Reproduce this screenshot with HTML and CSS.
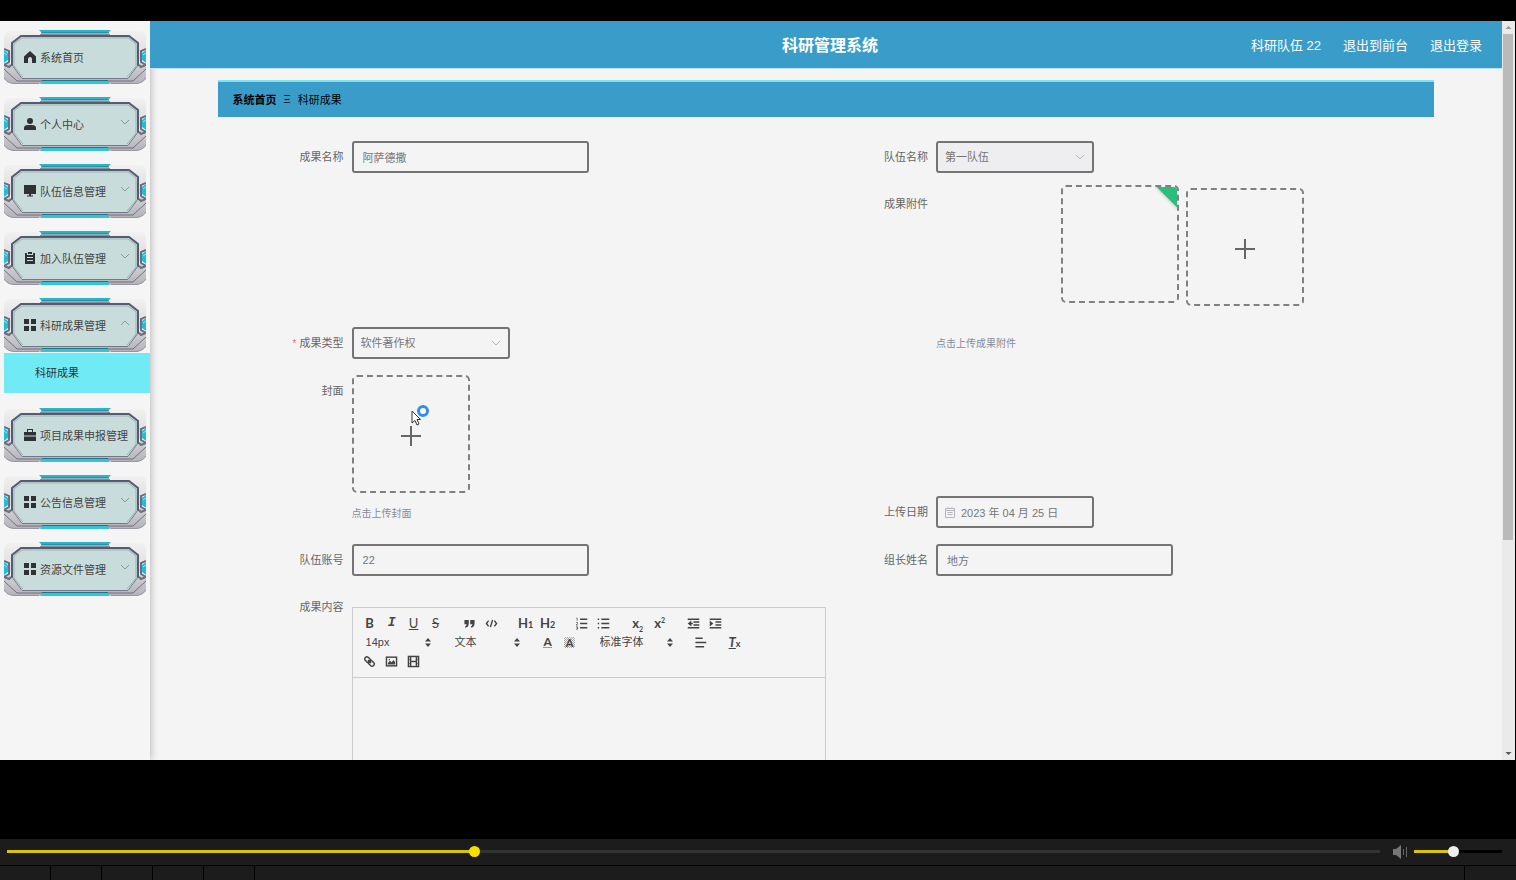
FILE: index.html
```html
<!DOCTYPE html>
<html lang="zh-CN">
<head>
    <meta charset="UTF-8">
    <meta name="viewport" content="width=device-width, initial-scale=1.0">
    <title>科研管理系统</title>
    <link rel="stylesheet" href="styles.css">
</head>
<body>
    <!-- shared icons -->
    <svg class="sprite" aria-hidden="true">
        <defs>
            <linearGradient id="silver" x1="0" y1="0" x2="0" y2="1">
                <stop offset="0" stop-color="#f1f1f1"/>
                <stop offset="1" stop-color="#d6d5d9"/>
            </linearGradient>
            <linearGradient id="steel" x1="0" y1="0" x2="0" y2="1">
                <stop offset="0" stop-color="#d5d4d8"/>
                <stop offset="1" stop-color="#b3b2b8"/>
            </linearGradient>
            <g id="half">
                <path d="M0 9Q0 2 6 2H33L36 5H71V9H17L9 16V35L6 31V20L0 19Z" fill="url(#silver)"/>
                <path d="M0 35L5 33L9 37L18 50H71V53H38L35 55H10Q3 54 0 49Z" fill="url(#steel)"/>
                <path d="M71 7H17L8 14V37L18 50H71Z" fill="#c8dddb"/>
                <path d="M71 9H18L10 15V37L19 48" fill="none" stroke="#9fb1b6"/>
                <path d="M71 7H17L8 14V37" fill="none" stroke="#555b70" stroke-width="2"/>
                <path d="M8 36L18 49.500H71" fill="none" stroke="#737888"/>
                <path d="M0 20L5 22V33L0 36L5 38L7 36" fill="none" stroke="#6b6f7f" stroke-width="2"/>
                <path d="M0 21L4 24V31L0 34Z" fill="#22bdd2"/>
                <path d="M0 24L3 26" stroke="#83edf5"/>
                <path d="M0 40L13 52H71" fill="none" stroke="#716f7d"/>
                <path d="M0 49Q3 54 10 54.500H35" fill="none" stroke="#9796a0"/>
                <path d="M36 5.500H71" stroke="#888c99"/>
                <path d="M35 1H71V4H38Z" fill="#25b5cc"/>
                <path d="M37 4H71" stroke="#2a7185"/>
                <path d="M38 52H71V55H36Z" fill="#35c3d8"/>
                <path d="M38 51.500H71" stroke="#2a7185"/>
            </g>
        </defs>
        <symbol id="frame" viewBox="0 0 142 55">
            <use href="#half"/>
            <use href="#half" transform="translate(142 0) scale(-1 1)"/>
        </symbol>
        <symbol id="home" viewBox="0 0 12 12"><path d="M6 0L0 5.500V12H4V8a2 2 0 0 1 4 0V12H12V5.500Z"/></symbol>
        <symbol id="user" viewBox="0 0 12 12"><circle cx="6" cy="3" r="3"/><path d="M0 12V10Q0 7 4 7H8Q12 7 12 10V12Z"/></symbol>
        <symbol id="monitor" viewBox="0 0 12 12"><path d="M0 0H12V9H7V10.500H9V11.500H3V10.500H5V9H0Z"/></symbol>
        <symbol id="clipboard" viewBox="0 0 12 12"><path fill-rule="evenodd" d="M1 1H3V3H9V1H11V12H1ZM3 5V6H9V5ZM3 8V9H9V8Z"/><path d="M4 0H8V2H4Z"/></symbol>
        <symbol id="grid" viewBox="0 0 12 12"><path d="M0 0H5V5H0ZM7 0H12V5H7ZM0 7H5V12H0ZM7 7H12V12H7Z"/></symbol>
        <symbol id="briefcase" viewBox="0 0 12 12"><path fill-rule="evenodd" d="M3 0H9V3H12V6.500H0V3H3ZM4 1V3H8V1ZM0 7.500H12V12H0Z"/></symbol>
        <symbol id="down" viewBox="0 0 10 6"><path d="M1 1L5 5L9 1" fill="none" stroke="currentColor"/></symbol>
        <symbol id="up" viewBox="0 0 10 6"><path d="M1 5L5 1L9 5" fill="none" stroke="currentColor"/></symbol>
        <symbol id="sort" viewBox="0 0 6 9"><path d="M0 3.500L3 0L6 3.500ZM0 5.500L3 9L6 5.500Z"/></symbol>
    </svg>

    <div class="player">
        <div class="screen">
            <nav class="sidebar">
                <ul class="menu">
                    <li><a class="menu-item" href="#"><svg class="frame"><use href="#frame"/></svg><svg class="icon"><use href="#home"/></svg><span>系统首页</span></a></li>
                    <li><a class="menu-item" href="#"><svg class="frame"><use href="#frame"/></svg><svg class="icon"><use href="#user"/></svg><span>个人中心</span><svg class="arrow"><use href="#down"/></svg></a></li>
                    <li><a class="menu-item" href="#"><svg class="frame"><use href="#frame"/></svg><svg class="icon"><use href="#monitor"/></svg><span>队伍信息管理</span><svg class="arrow"><use href="#down"/></svg></a></li>
                    <li><a class="menu-item" href="#"><svg class="frame"><use href="#frame"/></svg><svg class="icon"><use href="#clipboard"/></svg><span>加入队伍管理</span><svg class="arrow"><use href="#down"/></svg></a></li>
                    <li class="open">
                        <a class="menu-item" href="#"><svg class="frame"><use href="#frame"/></svg><svg class="icon"><use href="#grid"/></svg><span>科研成果管理</span><svg class="arrow"><use href="#up"/></svg></a>
                        <a class="submenu-item" href="#">科研成果</a>
                    </li>
                    <li><a class="menu-item" href="#"><svg class="frame"><use href="#frame"/></svg><svg class="icon"><use href="#briefcase"/></svg><span>项目成果申报管理</span></a></li>
                    <li><a class="menu-item" href="#"><svg class="frame"><use href="#frame"/></svg><svg class="icon"><use href="#grid"/></svg><span>公告信息管理</span><svg class="arrow"><use href="#down"/></svg></a></li>
                    <li><a class="menu-item" href="#"><svg class="frame"><use href="#frame"/></svg><svg class="icon"><use href="#grid"/></svg><span>资源文件管理</span><svg class="arrow"><use href="#down"/></svg></a></li>
                </ul>
            </nav>

            <main class="main">
                <header class="header">
                    <h1>科研管理系统</h1>
                    <div class="header-links">
                        <a href="#">科研队伍 22</a>
                        <a href="#">退出到前台</a>
                        <a href="#">退出登录</a>
                    </div>
                </header>
                <div class="breadcrumb">
                    <a href="#">系统首页</a>
                    <span>Ξ</span>
                    <span>科研成果</span>
                </div>

                <form class="form">
                    <div class="field name">
                        <label for="name">成果名称</label>
                        <input class="text-input" id="name" type="text" value="阿萨德撒">
                    </div>
                    <div class="field team">
                        <label for="team">队伍名称</label>
                        <div class="select-box">
                            <select id="team" disabled><option>第一队伍</option></select>
                            <svg class="arrow"><use href="#down"/></svg>
                        </div>
                    </div>
                    <div class="field attachment">
                        <span class="label">成果附件</span>
                        <div class="upload">
                            <div class="cards">
                                <div class="card done"></div>
                                <button class="card" type="button" aria-label="上传附件"><svg class="plus" viewBox="0 0 20 20"><path d="M10 0V20M0 10H20"/></svg></button>
                            </div>
                            <div class="tip">点击上传成果附件</div>
                        </div>
                    </div>
                    <div class="field type">
                        <label for="type"><span class="star">*</span> 成果类型</label>
                        <div class="select-box">
                            <select id="type"><option>软件著作权</option></select>
                            <svg class="arrow"><use href="#down"/></svg>
                        </div>
                    </div>
                    <div class="field cover">
                        <span class="label">封面</span>
                        <div class="upload">
                            <button class="card" type="button" aria-label="上传封面">
                                <svg class="plus" viewBox="0 0 20 20"><path d="M10 0V20M0 10H20"/></svg>
                                <svg class="cursor" viewBox="0 0 20 22">
                                    <circle cx="12" cy="6" r="4.500" fill="#fff" stroke="#2f8fee" stroke-width="3"/>
                                    <path d="M1 6V18L4 15.500L6 20L8 19L6 14.500H9.500Z" fill="#fff" stroke="#333"/>
                                </svg>
                            </button>
                            <div class="tip">点击上传封面</div>
                        </div>
                    </div>
                    <div class="field date">
                        <label for="date">上传日期</label>
                        <div class="date-box">
                            <svg class="calendar" viewBox="0 0 10 11"><path d="M.5 1.500H9.500V10.500H.5ZM.5 3.500H9.500M2.500 5.500H7.500M2.500 7.500H7.500M3 0V2M7 0V2"/></svg>
                            <input id="date" type="text" value="2023 年 04 月 25 日">
                        </div>
                    </div>
                    <div class="field account">
                        <label for="account">队伍账号</label>
                        <input class="text-input" id="account" type="text" value="22">
                    </div>
                    <div class="field leader">
                        <label for="leader">组长姓名</label>
                        <input class="text-input" id="leader" type="text" value="地方">
                    </div>
                    <div class="field content">
                        <span class="label">成果内容</span>
                        <div class="editor">
                            <div class="toolbar">
                                <div class="tool-row">
                                    <div class="tools">
                                        <button type="button"><b>B</b></button>
                                        <button type="button"><i class="italic">I</i></button>
                                        <button type="button"><u>U</u></button>
                                        <button type="button"><s>S</s></button>
                                    </div>
                                    <div class="tools">
                                        <button type="button" aria-label="引用"><svg viewBox="0 0 18 18"><path class="fill" d="M2 4H8V9Q8 14 3 15V13Q5 12 5 10H2ZM10 4H16V9Q16 14 11 15V13Q13 12 13 10H10Z"/></svg></button>
                                        <button type="button" aria-label="代码"><svg viewBox="0 0 18 18"><path d="M5 5L2 9L5 13M13 5L16 9L13 13M10.500 4L7.500 14"/></svg></button>
                                    </div>
                                    <div class="tools">
                                        <button type="button"><b>H<small>1</small></b></button>
                                        <button type="button"><b>H<small>2</small></b></button>
                                    </div>
                                    <div class="tools">
                                        <button type="button" aria-label="有序列表"><svg viewBox="0 0 18 18"><path d="M7 3H17M7 9H17M7 15H17"/><path class="thin" d="M2 1.500H3V5M1.500 7.500H3.500V9L1.500 11H4M1.500 13.500H3.500V17H1.500M2 15H3.500"/></svg></button>
                                        <button type="button" aria-label="无序列表"><svg viewBox="0 0 18 18"><path d="M6 3H17M6 9H17M6 15H17M1 3H3M1 9H3M1 15H3"/></svg></button>
                                    </div>
                                    <div class="tools">
                                        <button type="button"><b>x<sub>2</sub></b></button>
                                        <button type="button"><b>x<sup>2</sup></b></button>
                                    </div>
                                    <div class="tools">
                                        <button type="button" aria-label="减少缩进"><svg viewBox="0 0 18 18"><path d="M1 3H17M9 7H17M9 11H17M1 15H17M4 9H8"/><path class="fill" d="M1 9L6 5V13Z"/></svg></button>
                                        <button type="button" aria-label="增加缩进"><svg viewBox="0 0 18 18"><path d="M1 3H17M9 7H17M9 11H17M1 15H17"/><path class="fill" d="M6 9L1 5V13Z"/></svg></button>
                                    </div>
                                </div>
                                <div class="tool-row">
                                    <div class="picker"><select aria-label="字号"><option>14px</option></select><svg><use href="#sort"/></svg></div>
                                    <div class="picker"><select aria-label="标题"><option>文本</option></select><svg><use href="#sort"/></svg></div>
                                    <div class="tools">
                                        <button type="button"><b class="color">A</b></button>
                                        <button type="button"><b class="background">A</b></button>
                                    </div>
                                    <div class="picker wide"><select aria-label="字体"><option>标准字体</option></select><svg><use href="#sort"/></svg></div>
                                    <div class="tools">
                                        <button type="button" aria-label="对齐"><svg viewBox="0 0 18 18"><path d="M2 3H12M2 9H17M2 15H14"/></svg></button>
                                    </div>
                                    <div class="tools">
                                        <button type="button"><b class="clean"><u><i>T</i></u><small>x</small></b></button>
                                    </div>
                                </div>
                                <div class="tool-row">
                                    <div class="tools">
                                        <button type="button" aria-label="链接"><svg viewBox="0 0 18 18"><g transform="rotate(45 9 9)"><rect x="1" y="6" width="9" height="6" rx="3"/><rect x="8" y="6" width="9" height="6" rx="3"/><path d="M6 9H12"/></g></svg></button>
                                        <button type="button" aria-label="图片"><svg viewBox="0 0 18 18"><rect x="2" y="3" width="14" height="12"/><path class="fill" d="M4 13V11L7 8L9 10L12 7L14 10V13Z"/><circle class="fill" cx="6" cy="6.500" r="1"/></svg></button>
                                        <button type="button" aria-label="视频"><svg viewBox="0 0 18 18"><rect x="2" y="2" width="14" height="14"/><path d="M5 2V16M13 2V16M5 9H13"/><path class="thin" d="M2 6H5M2 12H5M13 6H16M13 12H16"/></svg></button>
                                    </div>
                                </div>
                            </div>
                            <div class="editor-body" contenteditable="true"></div>
                        </div>
                    </div>
                </form>
            </main>

            <div class="scrollbar">
                <svg class="muted" viewBox="0 0 13 13"><path d="M3.500 8L6.500 5L9.500 8Z"/></svg>
                <div class="scroll-track"><div class="scroll-thumb"></div></div>
                <svg viewBox="0 0 13 13"><path d="M3.500 5L6.500 8L9.500 5Z"/></svg>
            </div>
        </div>

        <div class="controls">
            <input class="range seek" type="range" aria-label="进度" min="0" max="1000" value="339" style="--fill: 34%">
            <svg class="speaker" viewBox="0 0 16 14"><path d="M1 4H4L9 0V14L4 10H1Z" fill="#777"/><path d="M11.500 4V10M14.500 2V12" stroke="#666"/></svg>
            <input class="range volume" type="range" aria-label="音量" min="0" max="100" value="44" style="--fill: 44%">
        </div>
        <div class="control-strip">
            <span></span><span></span><span></span><span></span><span></span>
            <span class="last"></span>
        </div>
    </div>
</body>
</html>
```
FILE: styles.css
```css
*, *::before, *::after {
    box-sizing: border-box;
}
body {
    margin: 0;
    background-color: #000;
    font-family: "Liberation Sans", "Noto Sans CJK SC", sans-serif;
    font-size: 11px;
    color: #666;
}
a {
    color: inherit;
    text-decoration: none;
}
button, input, select {
    margin: 0;
    font: inherit;
    color: inherit;
}
.sprite {
    position: absolute;
    width: 0;
    height: 0;
}

/* video player */
.player {
    display: flex;
    flex-direction: column;
    height: 100vh;
    padding-top: 21px;
}
.screen {
    flex: 1;
    display: flex;
    min-height: 0;
    margin: 0 1px 79px 0;
    overflow: hidden;
    background-color: #f4f4f4;
}

/* side menu */
.sidebar {
    flex: none;
    width: 150px;
    padding: 8px 0 0 4px;
    background-color: #f5f5f5;
    box-shadow: 0 0 8px rgba(0, 0, 0, 0.3);
}
.menu {
    margin: 0;
    padding: 0;
    list-style: none;
}
.menu li {
    margin-bottom: 12px;
}
.menu .open {
    margin-bottom: 14px;
}
.menu-item {
    position: relative;
    display: flex;
    align-items: center;
    gap: 4px;
    width: 142px;
    height: 55px;
    padding: 0 16px 0 20px;
    white-space: nowrap;
    color: #444;
}
.menu-item span, .menu-item .icon, .menu-item .arrow {
    position: relative;
}
.frame {
    position: absolute;
    inset: 0;
    width: 142px;
    height: 55px;
}
.icon {
    flex: none;
    width: 12px;
    height: 12px;
    fill: #303133;
}
.arrow {
    width: 10px;
    height: 6px;
    color: #909399;
}
.menu-item .arrow {
    margin: 0 0 4px auto;
}
.submenu-item {
    display: block;
    height: 40px;
    margin-top: 1px;
    padding-left: 31px;
    line-height: 40px;
    color: #333;
    background-color: #70ebf6;
}

/* page */
.main {
    flex: 1;
    min-width: 0;
}
.header {
    position: relative;
    display: flex;
    align-items: center;
    justify-content: center;
    height: 48px;
    padding-bottom: 1px;
    border-bottom: 1px solid #bfe3ee;
    background-color: #3a9dc9;
    color: #fff;
}
.header h1 {
    margin: 0;
    padding-left: 8px;
    font-size: 16px;
}
.header-links {
    position: absolute;
    right: 20px;
    display: flex;
    gap: 22px;
    font-size: 13px;
}
.breadcrumb {
    display: flex;
    align-items: center;
    gap: 7px;
    height: 37px;
    margin: 11px 5% 0;
    padding: 0 15px 1px;
    border-top: 2px solid #80e4ee;
    background-color: #3a9dc9;
    color: #000;
}
.breadcrumb a {
    font-weight: bold;
}

.form {
    display: grid;
    grid-template-columns: 1fr 1fr;
    grid-template-rows: 47px 139px 48px 169px 47px auto;
    margin: 0 5%;
    padding: 24px 24px 0;
}
.field {
    display: flex;
    align-items: flex-start;
}
.team, .attachment, .date, .leader {
    grid-column: 2;
}
.name, .team {
    grid-row: 1;
}
.attachment {
    grid-row: 2 / 4;
}
.type {
    grid-row: 3;
}
.cover, .date {
    grid-row: 4;
}
.date {
    align-items: flex-end;
    padding-bottom: 16px;
}
.account, .leader {
    grid-row: 5;
}
.content {
    grid-row: 6;
}
.field > label, .label {
    flex: none;
    width: 110px;
    padding-right: 8px;
    line-height: 32px;
    text-align: right;
}
.star {
    color: #f56c6c;
}
.text-input, .select-box, .date-box {
    height: 32px;
    border: 2px solid #747474;
    border-radius: 3px;
    background-color: transparent;
}
.text-input {
    width: 50%;
    max-width: 237px;
    padding: 0 9px;
    color: #777;
}
.select-box, .date-box {
    display: flex;
    align-items: center;
    width: 158px;
    color: #777;
}
.select-box select {
    flex: 1;
    height: 100%;
    padding: 0 0 0 7px;
    border: 0;
    appearance: none;
    background-color: transparent;
    opacity: 1;
}
.select-box .arrow {
    margin-right: 7px;
    color: #b4b7bd;
}
.team .select-box {
    background-color: #eeeef1;
}
.date-box {
    gap: 6px;
    padding-left: 7px;
}
.date-box input {
    width: 120px;
    padding: 0;
    border: 0;
    background-color: transparent;
}
.calendar {
    width: 10px;
    height: 11px;
    fill: none;
    stroke: #b4b7bd;
}

/* upload */
.card {
    position: relative;
    display: flex;
    align-items: center;
    justify-content: center;
    width: 118px;
    height: 118px;
    padding: 4px 0 0;
    border: 2px dashed #808080;
    border-radius: 5px;
    background-color: transparent;
}
.cards {
    display: flex;
    align-items: flex-end;
    gap: 7px;
    margin: -3px 0 0 125px;
}
.done {
    margin-bottom: 3px;
    overflow: hidden;
}
.done::after {
    content: "";
    position: absolute;
    top: -15px;
    right: -16px;
    width: 30px;
    height: 30px;
    background-color: #2bbd7e;
    box-shadow: 0 0 4px rgba(0, 0, 0, 0.3);
    transform: rotate(45deg);
}
.plus {
    width: 20px;
    height: 20px;
    stroke: #666;
    stroke-width: 2;
}
.cursor {
    position: absolute;
    left: 57px;
    top: 28px;
    width: 20px;
    height: 22px;
}
.tip {
    font-size: 10px;
    line-height: 16px;
    color: #858b99;
}
.attachment .tip {
    margin-top: 30px;
}
.cover .tip {
    margin-top: 13px;
}

/* rich text editor */
.editor {
    flex: 1;
    margin-top: 16px;
    border: 1px solid #ccc;
}
.toolbar {
    padding: 6px;
    height: 70px;
    border-bottom: 1px solid #ccc;
    color: #444;
}
.tool-row {
    display: flex;
    gap: 12px;
    height: 19px;
}
.tools {
    display: flex;
}
.tools button {
    display: flex;
    align-items: center;
    justify-content: center;
    width: 22px;
    height: 19px;
    padding: 0 0 1px;
    border: 0;
    background-color: transparent;
    font-family: Lato, sans-serif;
    font-size: 13px;
    line-height: 12px;
}
.tools svg {
    width: 13px;
    height: 13px;
    fill: none;
    stroke: #444;
    stroke-width: 2;
}
.tools .fill {
    fill: #444;
    stroke: none;
}
.tools .thin {
    stroke-width: 1;
}
.tools small {
    font-size: 9px;
    line-height: 1px;
}
.tools sub, .tools sup {
    font-size: 7px;
    line-height: 1px;
}
.tools .italic {
    font-family: "Liberation Mono", monospace;
    font-weight: bold;
}
.tools .color {
    border-bottom: 1px solid #999;
    font-size: 12px;
    line-height: 10px;
}
.tools .background {
    width: 11px;
    height: 11px;
    background: repeating-conic-gradient(#aaa 0 25%, transparent 0 50%) 0 0 / 2px 2px;
    font-size: 11px;
    line-height: 11px;
}
.picker {
    display: flex;
    align-items: center;
    width: 77px;
    padding: 0 5px 1px 7px;
}
.picker.wide {
    width: 85px;
}
.picker select {
    flex: 1;
    min-width: 0;
    padding: 0;
    border: 0;
    appearance: none;
    background-color: transparent;
}
.picker svg {
    width: 6px;
    height: 9px;
    fill: #444;
}
.editor-body {
    height: 200px;
}

/* page scrollbar */
.scrollbar {
    flex: none;
    display: flex;
    flex-direction: column;
    width: 13px;
    background-color: #eaeaea;
}
.scrollbar svg {
    flex: none;
    width: 13px;
    height: 13px;
    fill: #555;
}
.scrollbar .muted {
    fill: #999;
}
.scroll-track {
    flex: 1;
    padding: 0 2px 0 1px;
}
.scroll-thumb {
    height: 71%;
    background-color: #bababa;
}

/* player controls */
.controls {
    display: flex;
    align-items: center;
    height: 26px;
    padding: 0 14px 1px 7px;
    background-color: #1c1c1c;
}
.range {
    height: 11px;
    margin: 0;
    appearance: none;
    background: transparent;
}
.range::-webkit-slider-runnable-track {
    height: 3px;
    background: linear-gradient(to right, #d9c500 var(--fill), #333 var(--fill));
}
.range::-webkit-slider-thumb {
    appearance: none;
    width: 11px;
    height: 11px;
    margin-top: -4px;
    border-radius: 50%;
    background-color: #f6df00;
}
.seek {
    flex: 1;
}
.volume {
    width: 88px;
}
.volume::-webkit-slider-runnable-track {
    background: linear-gradient(to right, #d9c500 var(--fill), #000 var(--fill));
}
.volume::-webkit-slider-thumb {
    background-color: #eee;
}
.speaker {
    width: 16px;
    height: 14px;
    margin: 0 6px 0 12px;
}
.control-strip {
    display: flex;
    height: 15px;
    border-top: 1px solid #000;
    background-color: #1c1c1c;
}
.control-strip span {
    width: 51px;
    border-right: 1px solid #000;
}
.control-strip .last {
    width: 52px;
    margin-left: auto;
    border-right: 0;
    border-left: 1px solid #000;
}
```
